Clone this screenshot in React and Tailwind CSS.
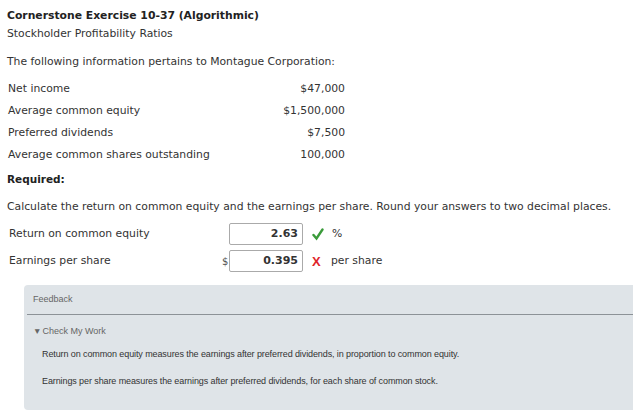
import React from 'react';

// Dados do exercício
const facts = [
  { label: 'Net income', value: '$47,000' },
  { label: 'Average common equity', value: '$1,500,000' },
  { label: 'Preferred dividends', value: '$7,500' },
  { label: 'Average common shares outstanding', value: '100,000' },
];

const CheckMark = () => (
  <svg width="12" height="13" viewBox="0 0 12 13">
    <path d="M1.5 7 L4.5 10.5 L10.5 1.5" fill="none" stroke="#3a9b3a" strokeWidth="2.4" strokeLinecap="round" />
  </svg>
);

const CrossMark = () => (
  <span className="font-bold text-[13px] text-[#e0242a] leading-none" style={{ fontFamily: 'Liberation Sans, Arial, sans-serif' }}>X</span>
);

const App = () => {
  return (
    <div
      className="w-[633px] h-[415px] bg-white text-[#333] text-[10.8px] overflow-hidden"
      style={{ fontFamily: '"DejaVu Sans", Verdana, sans-serif' }}
    >
      <div className="pl-[7px] pt-[9px]">
        <h1 className="font-bold text-[10.8px] text-[#222] leading-[14px]">Cornerstone Exercise 10-37 (Algorithmic)</h1>
        <p className="mt-[4px] leading-[14px]">Stockholder Profitability Ratios</p>

        <p className="mt-[14px] leading-[14px]">The following information pertains to Montague Corporation:</p>

        <div className="mt-[9px] w-[338px]">
          {facts.map((f) => (
            <div key={f.label} className="flex justify-between h-[22px] items-center pl-[1px]">
              <span>{f.label}</span>
              <span>{f.value}</span>
            </div>
          ))}
        </div>

        <p className="mt-[6px] font-bold text-[10.5px] leading-[14px] text-[#222]">Required:</p>

        <p className="mt-[14px] leading-[14px]">
          Calculate the return on common equity and the earnings per share. Round your answers to two decimal places.
        </p>

        <div className="mt-[9px] flex flex-col gap-[5px]">
          <div className="flex items-center h-[22px]">
            <span className="w-[215px] pl-[2px]">Return on common equity</span>
            <span className="w-[7px]"></span>
            <div className="w-[74px] h-[22px] border border-[#aaa] rounded-[2px] flex items-center justify-end pr-[4px] font-bold text-[11px]">2.63</div>
            <span className="ml-[9px] w-[12px] flex items-center"><CheckMark /></span>
            <span className="ml-[8px]">%</span>
          </div>
          <div className="flex items-center h-[22px]">
            <span className="w-[215px] pl-[2px]">Earnings per share</span>
            <span className="w-[7px] text-[10px] text-[#555]">$</span>
            <div className="w-[74px] h-[22px] border border-[#aaa] rounded-[2px] flex items-center justify-end pr-[4px] font-bold text-[11px]">0.395</div>
            <span className="ml-[9px] w-[12px] flex items-center"><CrossMark /></span>
            <span className="ml-[7px]">per share</span>
          </div>
        </div>
      </div>

      {/* Feedback */}
      <div
        className="ml-[24px] mt-[13px] h-[125px] bg-[#dfe4e8] rounded-l-[4px] pl-[9px] pt-[8px] text-[#444]"
        style={{ fontFamily: '"Liberation Sans", Arial, sans-serif' }}
      >
        <p className="text-[9px] text-[#666] leading-[12px]">Feedback</p>
        <div className="mt-[9px] -ml-[6px] h-px bg-[#8c9297]"></div>
        <p className="mt-[10px] text-[9px] text-[#666] leading-[12px]"><span className="text-[8.5px] mr-[1px]">▼</span>Check My Work</p>
        <p className="mt-[10px] ml-[9px] text-[9px] tracking-[-0.1px] text-[#333] leading-[14px]">
          Return on common equity measures the earnings after preferred dividends, in proportion to common equity.
        </p>
        <p className="mt-[13px] ml-[9px] text-[9px] tracking-[-0.1px] text-[#333] leading-[14px]">
          Earnings per share measures the earnings after preferred dividends, for each share of common stock.
        </p>
      </div>
    </div>
  );
};

export default App;
